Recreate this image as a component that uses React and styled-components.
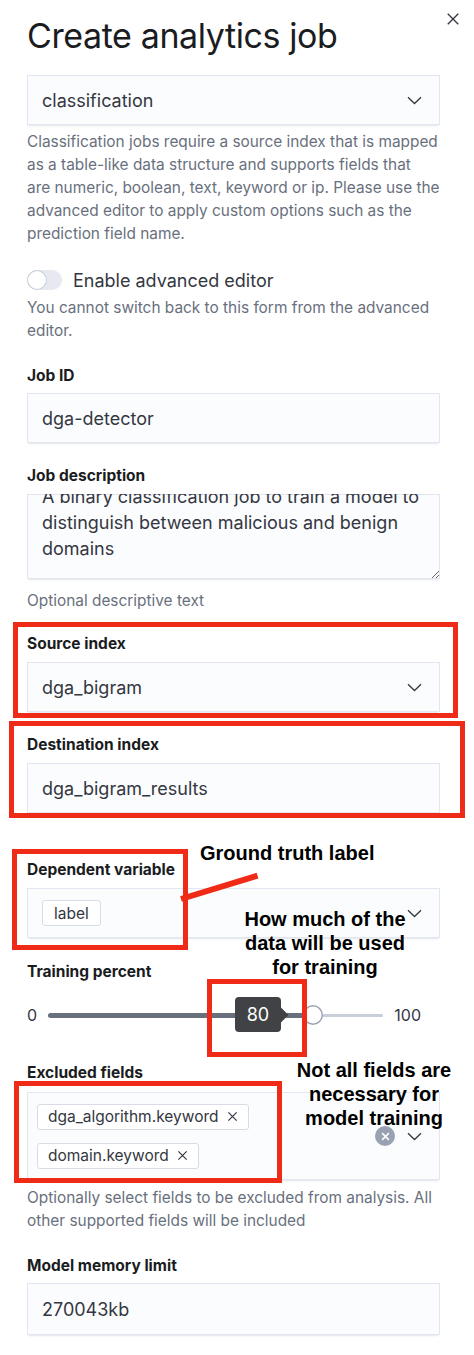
import styled, { createGlobalStyle } from 'styled-components';

const GlobalStyle = createGlobalStyle`
    html, body {
        margin: 0;
        padding: 0;
        background: #ffffff;
    }
    body {
        font-family: Inter, "Noto Sans", sans-serif;
        color: #343741;
    }
    * {
        box-sizing: border-box;
    }
`;

const Flyout = styled.div`
    position: relative;
    width: 474px;
    min-height: 1355px;
    padding: 16px 34px 20px 27px;
    overflow: hidden;
`;

const CloseButton = styled.button`
    position: absolute;
    top: 11px;
    right: 13px;
    width: 16px;
    height: 16px;
    padding: 0;
    border: none;
    background: none;
    color: #343741;
    display: flex;
    align-items: center;
    justify-content: center;
`;

const Title = styled.h1`
    margin: 0 0 19px;
    font-size: 34px;
    line-height: 40px;
    font-weight: 400;
    letter-spacing: -0.4px;
    color: #1a1c21;
`;

const Row = styled.div`
    margin-top: ${(p) => p.$gap || 0}px;
`;

const Label = styled.div`
    font-size: 15.5px;
    line-height: 20px;
    font-weight: 700;
    color: #1a1c21;
    margin-bottom: ${(p) => p.$space || 8}px;
`;

const Help = styled.div`
    margin-top: ${(p) => p.$gap || 5}px;
    font-size: 15.4px;
    line-height: 23px;
    color: #69707d;
    white-space: ${(p) => (p.$fixed ? 'nowrap' : 'normal')};
`;

const Control = styled.div`
    display: flex;
    align-items: center;
    justify-content: space-between;
    width: 100%;
    height: ${(p) => p.$height || 50}px;
    padding: 0 18px 0 ${(p) => p.$padLeft || 15}px;
    background: #fbfcfd;
    box-shadow: 0 1px 1px -1px rgba(152, 162, 179, 0.25),
        0 3px 2px -2px rgba(152, 162, 179, 0.25),
        inset 0 0 0 1px rgba(17, 43, 134, 0.1);
    font-size: 18px;
    color: #343741;
`;

const TextArea = styled.textarea`
    display: block;
    width: 100%;
    height: 85px;
    padding: 12px 15px 17px;
    border: none;
    outline: none;
    resize: vertical;
    overflow: hidden;
    background: #fbfcfd;
    box-shadow: 0 1px 1px -1px rgba(152, 162, 179, 0.25),
        0 3px 2px -2px rgba(152, 162, 179, 0.25),
        inset 0 0 0 1px rgba(17, 43, 134, 0.1);
    font-family: Inter, "Noto Sans", sans-serif;
    font-size: 18px;
    line-height: 26px;
    color: #343741;
`;

const ToggleRow = styled.div`
    display: flex;
    align-items: center;
    gap: 11px;
    height: 24px;
    font-size: 18px;
    color: #343741;
`;

const Switch = styled.span`
    position: relative;
    width: 35px;
    height: 20px;
    border-radius: 10px;
    background: #e6e9ef;
    flex-shrink: 0;
    &::after {
        content: '';
        position: absolute;
        left: 0;
        top: 0;
        width: 20px;
        height: 20px;
        border-radius: 50%;
        background: #ffffff;
        box-shadow: inset 0 0 0 1px #c5cbd4;
    }
`;

const Pills = styled.div`
    display: flex;
    flex-direction: column;
    align-items: flex-start;
    gap: 13px;
`;

const Pill = styled.span`
    display: inline-flex;
    align-items: center;
    gap: 8px;
    height: 26px;
    padding: 0 ${(p) => p.$pad || 10}px;
    background: #ffffff;
    border: 1px solid #d8dde5;
    border-radius: 3px;
    font-size: 15.5px;
    color: #343741;
`;

const Icons = styled.div`
    display: flex;
    align-items: center;
    gap: 12px;
`;

const ClearIcon = styled.span`
    width: 20px;
    height: 20px;
    border-radius: 50%;
    background: #98a2b3;
    display: flex;
    align-items: center;
    justify-content: center;
`;

const SliderRow = styled.div`
    display: flex;
    align-items: center;
    gap: 11px;
    height: 40px;
    margin-top: 13px;
    padding-right: 19px;
    font-size: 16px;
    color: #343741;
`;

const Track = styled.div`
    position: relative;
    flex: 1;
    height: 3px;
    border-radius: 2px;
    background: #c9cfd8;
`;

const Fill = styled.div`
    position: absolute;
    left: 0;
    top: -1px;
    height: 5px;
    border-radius: 3px;
    background: #69707d;
`;

const Thumb = styled.div`
    position: absolute;
    top: 50%;
    width: 20px;
    height: 20px;
    margin: -10px 0 0 -10px;
    border-radius: 50%;
    background: #ffffff;
    box-shadow: inset 0 0 0 1.5px #98a2b3;
`;

const ValueTip = styled.div`
    position: absolute;
    top: 50%;
    width: 46px;
    height: 35px;
    margin-top: -18px;
    border-radius: 4px;
    background: #404246;
    color: #ffffff;
    font-size: 18px;
    display: flex;
    align-items: center;
    justify-content: center;
    &::after {
        content: '';
        position: absolute;
        right: -5px;
        top: 50%;
        width: 12px;
        height: 12px;
        margin-top: -6px;
        background: #404246;
        transform: rotate(45deg);
        border-radius: 1px;
    }
`;

// annotations drawn over the form
const RedBox = styled.div`
    position: absolute;
    left: ${(p) => p.$x}px;
    top: ${(p) => p.$y}px;
    width: ${(p) => p.$w}px;
    height: ${(p) => p.$h}px;
    border: 5px solid #ef2a17;
    pointer-events: none;
`;

const RedLine = styled.div`
    position: absolute;
    left: 181px;
    top: 896px;
    width: 80px;
    height: 6px;
    background: #ef2a17;
    transform-origin: 0 50%;
    transform: rotate(-17deg);
`;

const Note = styled.div`
    position: absolute;
    left: ${(p) => p.$x}px;
    top: ${(p) => p.$y}px;
    width: ${(p) => p.$w}px;
    text-align: ${(p) => p.$align || 'center'};
    font-family: "Liberation Sans", Arial, sans-serif;
    font-weight: 700;
    font-size: 20px;
    line-height: 24px;
    color: #000000;
`;

function Chevron() {
    return (
        <svg width="15" height="9" viewBox="0 0 15 9" fill="none">
            <path d="M1 1.2 L7.5 7.5 L14 1.2" stroke="#343741" strokeWidth="1.3" />
        </svg>
    );
}

function Cross({ size = 12, color = '#343741', width = 1.3 }) {
    return (
        <svg width={size} height={size} viewBox="0 0 12 12" fill="none">
            <path d="M1.5 1.5 L10.5 10.5 M10.5 1.5 L1.5 10.5" stroke={color} strokeWidth={width} />
        </svg>
    );
}

export default function App() {
    const training = 80;

    return (
        <>
            <GlobalStyle />
            <Flyout>
                <CloseButton aria-label="Close">
                    <Cross size={14} width={1.2} />
                </CloseButton>
                <Title>Create analytics job</Title>

                <Control>
                    <span>classification</span>
                    <Chevron />
                </Control>
                <Help $fixed>
                    Classification jobs require a source index that is mapped
                    <br />
                    as a table-like data structure and supports fields that
                    <br />
                    are numeric, boolean, text, keyword or ip. Please use the
                    <br />
                    advanced editor to apply custom options such as the
                    <br />
                    prediction field name.
                </Help>

                <Row $gap={23}>
                    <ToggleRow>
                        <Switch />
                        <span>Enable advanced editor</span>
                    </ToggleRow>
                    <Help $gap={4}>
                        You cannot switch back to this form from the advanced editor.
                    </Help>
                </Row>

                <Row $gap={24}>
                    <Label $space={7}>Job ID</Label>
                    <Control>dga-detector</Control>
                </Row>

                <Row $gap={23}>
                    <Label>Job description</Label>
                    <TextArea
                        readOnly
                        ref={(el) => {
                            if (el) el.scrollTop = 22;
                        }}
                        defaultValue="A binary classification job to train a model to distinguish between malicious and benign domains"
                    />
                    <Help $gap={10}>Optional descriptive text</Help>
                </Row>

                <Row $gap={22}>
                    <Label>Source index</Label>
                    <Control>
                        <span>dga_bigram</span>
                        <Chevron />
                    </Control>
                </Row>

                <Row $gap={23}>
                    <Label>Destination index</Label>
                    <Control>dga_bigram_results</Control>
                </Row>

                <Row $gap={47}>
                    <Label>Dependent variable</Label>
                    <Control>
                        <Pill $pad={11}>label</Pill>
                        <Chevron />
                    </Control>
                </Row>

                <Row $gap={24}>
                    <Label>Training percent</Label>
                    <SliderRow>
                        <span>0</span>
                        <Track>
                            <Fill style={{ width: `${training - 1}%` }} />
                            <ValueTip style={{ left: `calc(${training - 1}% - 78px)` }}>
                                {training}
                            </ValueTip>
                            <Thumb style={{ left: `${training - 1}%` }} />
                        </Track>
                        <span>100</span>
                    </SliderRow>
                </Row>

                <Row $gap={28}>
                    <Label $space={9}>Excluded fields</Label>
                    <Control $height={88} $padLeft={10}>
                        <Pills>
                            <Pill>
                                dga_algorithm.keyword
                                <Cross size={11} />
                            </Pill>
                            <Pill>
                                domain.keyword
                                <Cross size={11} />
                            </Pill>
                        </Pills>
                        <Icons>
                            <ClearIcon>
                                <Cross size={9} color="#ffffff" width={2} />
                            </ClearIcon>
                            <Chevron />
                        </Icons>
                    </Control>
                    <Help $gap={6}>
                        Optionally select fields to be excluded from analysis. All other
                        supported fields will be included
                    </Help>
                </Row>

                <Row $gap={24}>
                    <Label $space={7}>Model memory limit</Label>
                    <Control $height={52}>270043kb</Control>
                </Row>

                <RedBox $x={13} $y={622} $w={445} $h={96} />
                <RedBox $x={9} $y={721} $w={456} $h={97} />
                <RedBox $x={12} $y={849} $w={176} $h={101} />
                <RedBox $x={207} $y={979} $w={100} $h={78} />
                <RedBox $x={14} $y={1081} $w={268} $h={102} />
                <RedLine />

                <Note $x={200} $y={841} $w={220} $align="left">
                    Ground truth label
                </Note>
                <Note $x={225} $y={907} $w={200}>
                    How much of the
                    <br />
                    data will be used
                    <br />
                    for training
                </Note>
                <Note $x={284} $y={1058} $w={180}>
                    Not all fields are
                    <br />
                    necessary for
                    <br />
                    model training
                </Note>
            </Flyout>
        </>
    );
}
